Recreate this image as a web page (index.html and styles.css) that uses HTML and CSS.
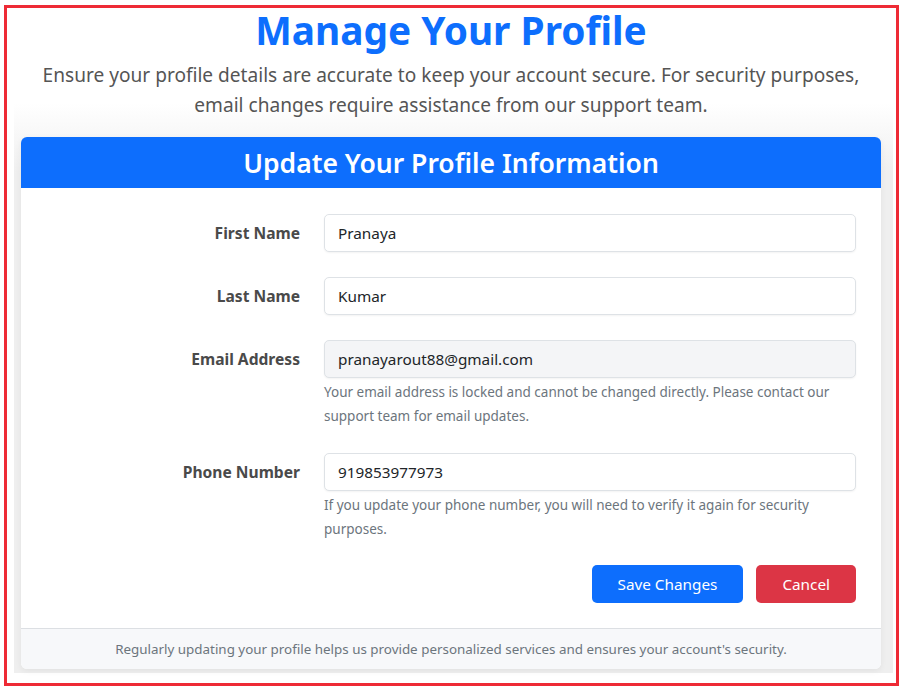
FILE: index.html
```html
<!DOCTYPE html>
<html lang="en">
<head>
<meta charset="utf-8">
<title>Manage Your Profile</title>
<link rel="stylesheet" href="styles.css">
</head>
<body>
<div class="frame">
  <div class="wrap">
    <h1 class="title">Manage Your Profile</h1>
    <p class="lead">Ensure your profile details are accurate to keep your account secure. For security purposes,<br>email changes require assistance from our support team.</p>
    <div class="card">
      <div class="card-header">Update Your Profile Information</div>
      <form class="card-body">
        <div class="row">
          <label class="label" for="fn">First Name</label>
          <div class="field"><input id="fn" class="input" type="text" value="Pranaya"></div>
        </div>
        <div class="row">
          <label class="label" for="ln">Last Name</label>
          <div class="field"><input id="ln" class="input" type="text" value="Kumar"></div>
        </div>
        <div class="row">
          <label class="label" for="em">Email Address</label>
          <div class="field">
            <input id="em" class="input locked" type="email" value="pranayarout88@gmail.com" readonly>
            <p class="help">Your email address is locked and cannot be changed directly. Please contact our<br>support team for email updates.</p>
          </div>
        </div>
        <div class="row">
          <label class="label" for="ph">Phone Number</label>
          <div class="field">
            <input id="ph" class="input" type="text" value="919853977973">
            <p class="help">If you update your phone number, you will need to verify it again for security<br>purposes.</p>
          </div>
        </div>
        <div class="actions">
          <button type="button" class="btn btn-primary">Save Changes</button>
          <button type="button" class="btn btn-danger">Cancel</button>
        </div>
      </form>
      <div class="card-footer">Regularly updating your profile helps us provide personalized services and ensures your account's security.</div>
    </div>
  </div>
</div>
</body>
</html>
```
FILE: styles.css
```css
* { box-sizing: border-box; }
html, body { margin: 0; padding: 0; background: #fff; }
body { font-family: "Noto Sans", "Open Sans", sans-serif; color: #212529; }

.frame {
  margin: 5px 1px 0 4px;
  height: 681px;
  border: 3px solid #ee2a35;
  padding: 0 3px 0 7px;
  background: #fff;
}

.wrap {
  height: 665px;
  padding: 0 12px 0 7px;
  background: linear-gradient(to bottom, #ffffff 0, #ffffff 95px, #efefef 165px, #efefef 100%);
}

.title {
  margin: 0 0 8px;
  font-size: 38.8px;
  line-height: 44px;
  font-weight: 700;
  color: #0d6efd;
  text-align: center;
}

.lead {
  margin: 0 0 17px;
  font-size: 19.1px;
  line-height: 30px;
  color: #555;
  text-align: center;
}

.card {
  background: #fff;
  border-radius: 6px;
  overflow: hidden;
  box-shadow: 0 2px 6px rgba(0,0,0,0.06);
}

.card-header {
  height: 51px;
  background: #0d6efd;
  color: #fff;
  font-size: 26.5px;
  font-weight: 600;
  line-height: 52px;
  text-align: center;
}

.card-body {
  padding: 26px 25px 25px 21px;
  display: flex;
  flex-direction: column;
  gap: 25px;
}

.row {
  display: grid;
  grid-template-columns: 258px 1fr;
  column-gap: 24px;
  align-items: start;
}

.label {
  text-align: right;
  font-size: 15.6px;
  font-weight: 700;
  line-height: 38px;
  color: #4a4a4a;
}

.input {
  display: block;
  width: 100%;
  height: 38px;
  padding: 0 13px;
  border: 1px solid #dee2e6;
  border-radius: 5px;
  font-family: inherit;
  font-size: 15.3px;
  color: #212529;
  background: #fff;
  box-shadow: 0 1px 2px rgba(0,0,0,0.05);
}

.input.locked { background: #f4f5f7; }

.help {
  margin: 2px 0 0;
  font-size: 13.5px;
  line-height: 24px;
  color: #6c757d;
}

.actions {
  display: flex;
  justify-content: flex-end;
  gap: 13px;
  margin-top: -1px;
}

.btn {
  height: 38px;
  padding: 0 26px;
  border: none;
  border-radius: 5px;
  font-family: inherit;
  font-size: 15.3px;
  color: #fff;
  cursor: pointer;
}

.btn-primary { background: #0d6efd; }
.btn-danger { background: #dc3545; }

.card-footer {
  height: 41px;
  border-top: 1px solid #dcdfe3;
  background: #f7f8fa;
  font-size: 13.4px;
  line-height: 40px;
  color: #6c757d;
  text-align: center;
}
```
